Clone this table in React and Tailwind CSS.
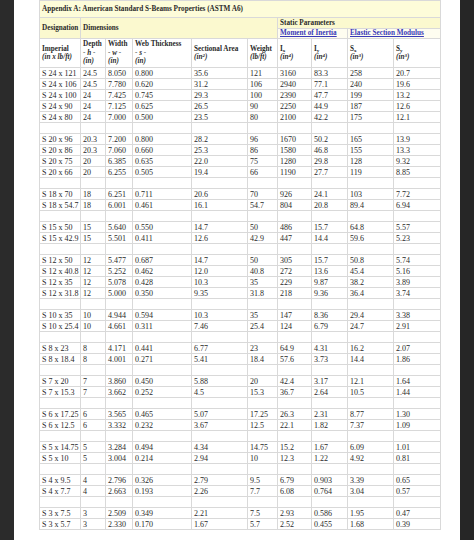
import React from "react";

const rows = [
    ["S 24 x 121", "24.5", "8.050", "0.800", "35.6", "121", "3160", "83.3", "258", "20.7"],
    ["S 24 x 106", "24.5", "7.780", "0.620", "31.2", "106", "2940", "77.1", "240", "19.6"],
    ["S 24 x 100", "24", "7.425", "0.745", "29.3", "100", "2390", "47.7", "199", "13.2"],
    ["S 24 x 90", "24", "7.125", "0.625", "26.5", "90", "2250", "44.9", "187", "12.6"],
    ["S 24 x 80", "24", "7.000", "0.500", "23.5", "80", "2100", "42.2", "175", "12.1"],
    null,
    ["S 20 x 96", "20.3", "7.200", "0.800", "28.2", "96", "1670", "50.2", "165", "13.9"],
    ["S 20 x 86", "20.3", "7.060", "0.660", "25.3", "86", "1580", "46.8", "155", "13.3"],
    ["S 20 x 75", "20", "6.385", "0.635", "22.0", "75", "1280", "29.8", "128", "9.32"],
    ["S 20 x 66", "20", "6.255", "0.505", "19.4", "66", "1190", "27.7", "119", "8.85"],
    null,
    ["S 18 x 70", "18", "6.251", "0.711", "20.6", "70", "926", "24.1", "103", "7.72"],
    ["S 18 x 54.7", "18", "6.001", "0.461", "16.1", "54.7", "804", "20.8", "89.4", "6.94"],
    null,
    ["S 15 x 50", "15", "5.640", "0.550", "14.7", "50", "486", "15.7", "64.8", "5.57"],
    ["S 15 x 42.9", "15", "5.501", "0.411", "12.6", "42.9", "447", "14.4", "59.6", "5.23"],
    null,
    ["S 12 x 50", "12", "5.477", "0.687", "14.7", "50", "305", "15.7", "50.8", "5.74"],
    ["S 12 x 40.8", "12", "5.252", "0.462", "12.0", "40.8", "272", "13.6", "45.4", "5.16"],
    ["S 12 x 35", "12", "5.078", "0.428", "10.3", "35", "229", "9.87", "38.2", "3.89"],
    ["S 12 x 31.8", "12", "5.000", "0.350", "9.35", "31.8", "218", "9.36", "36.4", "3.74"],
    null,
    ["S 10 x 35", "10", "4.944", "0.594", "10.3", "35", "147", "8.36", "29.4", "3.38"],
    ["S 10 x 25.4", "10", "4.661", "0.311", "7.46", "25.4", "124", "6.79", "24.7", "2.91"],
    null,
    ["S 8 x 23", "8", "4.171", "0.441", "6.77", "23", "64.9", "4.31", "16.2", "2.07"],
    ["S 8 x 18.4", "8", "4.001", "0.271", "5.41", "18.4", "57.6", "3.73", "14.4", "1.86"],
    null,
    ["S 7 x 20", "7", "3.860", "0.450", "5.88", "20", "42.4", "3.17", "12.1", "1.64"],
    ["S 7 x 15.3", "7", "3.662", "0.252", "4.5", "15.3", "36.7", "2.64", "10.5", "1.44"],
    null,
    ["S 6 x 17.25", "6", "3.565", "0.465", "5.07", "17.25", "26.3", "2.31", "8.77", "1.30"],
    ["S 6 x 12.5", "6", "3.332", "0.232", "3.67", "12.5", "22.1", "1.82", "7.37", "1.09"],
    null,
    ["S 5 x 14.75", "5", "3.284", "0.494", "4.34", "14.75", "15.2", "1.67", "6.09", "1.01"],
    ["S 5 x 10", "5", "3.004", "0.214", "2.94", "10", "12.3", "1.22", "4.92", "0.81"],
    null,
    ["S 4 x 9.5", "4", "2.796", "0.326", "2.79", "9.5", "6.79", "0.903", "3.39", "0.65"],
    ["S 4 x 7.7", "4", "2.663", "0.193", "2.26", "7.7", "6.08", "0.764", "3.04", "0.57"],
    null,
    ["S 3 x 7.5", "3", "2.509", "0.349", "2.21", "7.5", "2.93", "0.586", "1.95", "0.47"],
    ["S 3 x 5.7", "3", "2.330", "0.170", "1.67", "5.7", "2.52", "0.455", "1.68", "0.39"],
];

const hd = "px-[2px] flex items-center font-bold text-[7.2px] leading-[8.5px] overflow-hidden";
const td = "bg-white px-[2px] h-[10px] flex items-center whitespace-nowrap overflow-hidden";

function Unit({ children }) {
    return <div className="italic">{children}</div>;
}

function Sup({ children }) {
    return <sup className="text-[5px] leading-none">{children}</sup>;
}

function Sub({ children }) {
    return <sub className="text-[5px] leading-none">{children}</sub>;
}

function HeadCell({ title, sub, units }) {
    return (
        <div className={hd + " bg-white h-[28px]"}>
            <div>
                <div>
                    {title}
                    {sub && <Sub>{sub}</Sub>}
                </div>
                {units.map((u, i) => (
                    <Unit key={i}>{u}</Unit>
                ))}
            </div>
        </div>
    );
}

export default function App() {
    return (
        <div
            className="flex w-[474px] h-[540px] overflow-hidden bg-white"
            style={{ fontFamily: '"Liberation Serif", "Times New Roman", serif' }}
        >
            <div className="w-[14px] shrink-0 bg-[#2b2b2b]" />
            <div className="w-[446px] shrink-0 bg-white flex items-start">
                {/* 10 columns + 9 gap lines + outer border = 402px */}
                <div className="ml-[25px] w-[402px] grid grid-cols-[40px_24px_26px_58px_55px_29px_33px_35px_45px_46px] gap-px p-px bg-[#d9d9d9] text-[8px] leading-[9px] text-[#2a2a2a]">
                    <div className={hd + " col-span-10 h-[16px] bg-[#fdfcd9]"}>
                        Appendix A: American Standard S-Beams Properties (ASTM A6)
                    </div>

                    <div className={hd + " row-span-2 bg-[#fbf9cf]"}>Designation</div>
                    <div className={hd + " row-span-2 col-span-5 bg-[#fbf9cf]"}>Dimensions</div>
                    <div className={hd + " col-span-4 h-[10px] bg-[#fbf9cf]"}>Static Parameters</div>
                    <div className={hd + " col-span-2 h-[9px] bg-[#fefdf0] text-[#3a3ab8] underline"}>
                        Moment of Inertia
                    </div>
                    <div className={hd + " col-span-2 h-[9px] bg-[#fefdf0] text-[#3a3ab8] underline"}>
                        Elastic Section Modulus
                    </div>

                    <HeadCell title="Imperial" units={["(in x lb/ft)"]} />
                    <HeadCell title="Depth" units={["- h -", "(in)"]} />
                    <HeadCell title="Width" units={["- w -", "(in)"]} />
                    <HeadCell title="Web Thickness" units={["- s -", "(in)"]} />
                    <HeadCell title="Sectional Area" units={[<>(in<Sup>2</Sup>)</>]} />
                    <HeadCell title="Weight" units={["(lb/ft)"]} />
                    <HeadCell title="I" sub="x" units={[<>(in<Sup>4</Sup>)</>]} />
                    <HeadCell title="I" sub="y" units={[<>(in<Sup>4</Sup>)</>]} />
                    <HeadCell title="S" sub="x" units={[<>(in<Sup>3</Sup>)</>]} />
                    <HeadCell title="S" sub="y" units={[<>(in<Sup>3</Sup>)</>]} />

                    {rows.map((r, i) =>
                        (r || Array(10).fill("")).map((v, j) => (
                            <div key={i + "-" + j} className={td}>
                                {v}
                            </div>
                        ))
                    )}
                </div>
            </div>
            <div className="flex-1 bg-[#262626]" />
        </div>
    );
}
